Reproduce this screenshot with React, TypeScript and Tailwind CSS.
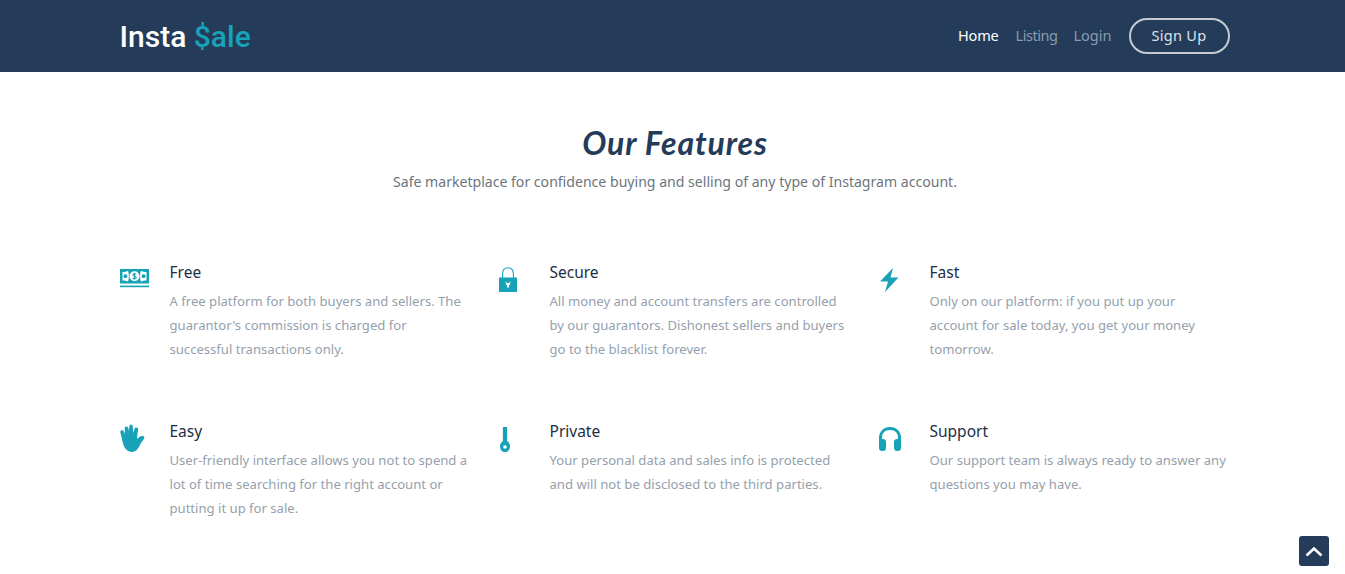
import React from 'react';

const MoneyIcon = () => (
  <svg width="29" height="19" viewBox="0 0 29 19" className="block">
    <rect x="0" y="0" width="29" height="14.5" fill="#17a2b8" />
    <path d="M2.5 3 C5 3 6.5 2.4 8 2 C9.2 4.5 9.2 10 8 12.5 C6.5 12 5 11.5 2.5 11.5 Z" fill="#fff" />
    <path d="M26.5 3 C24 3 22.5 2.4 21 2 C19.8 4.5 19.8 10 21 12.5 C22.5 12 24 11.5 26.5 11.5 Z" fill="#fff" />
    <circle cx="5.4" cy="7.2" r="1.9" fill="#17a2b8" />
    <circle cx="23.6" cy="7.2" r="1.9" fill="#17a2b8" />
    <circle cx="14.5" cy="7.2" r="5" fill="#fff" />
    <path d="M16.2 5.2 C15.2 4.4 13 4.6 13 6 C13 7.6 16.2 6.8 16.2 8.4 C16.2 9.8 13.8 10 12.8 9.2 M14.5 3.8 V10.6" stroke="#17a2b8" strokeWidth="1.1" fill="none" />
    <rect x="0" y="16.6" width="29" height="1.6" fill="#17a2b8" />
  </svg>
);

const LockIcon = () => (
  <svg width="18" height="25" viewBox="0 0 18 25" className="block">
    <path d="M3.6 11 V6.8 C3.6 2.8 6 0.7 9 0.7 C12 0.7 14.4 2.8 14.4 6.8 V11" fill="none" stroke="#17a2b8" strokeWidth="1.1" />
    <rect x="0" y="10.5" width="18" height="14.5" fill="#17a2b8" />
    <path d="M6.6 14 L8 16 H10 L11.4 14 L11 18 H10 V20.5 H8 V18 H7 Z" fill="#fff" />
  </svg>
);

const BoltIcon = () => (
  <svg width="19" height="24" viewBox="0 0 19 24" className="block">
    <path d="M13 0 L0 13.5 H8 L5 24 L18.5 9.5 H10.5 Z" fill="#17a2b8" />
  </svg>
);

const HandIcon = () => (
  <svg width="27" height="28" viewBox="0 0 28 30" className="block">
    <path d="M9 28 C6 26 4.5 22 3.8 18 L1.6 9 C1.2 7.2 3.4 6.6 4.2 8.2 L6.8 14 L6.2 5 C6.1 3 8.6 2.8 9 4.8 L10.6 12.6 L11.2 2.6 C11.3 0.8 13.6 0.8 13.7 2.6 L14.2 12.8 L16.8 5.4 C17.4 3.6 19.7 4.4 19.3 6.2 L18 17 L23 13.6 C25 12.4 27 14.2 25.6 15.8 C23.2 18.4 21.6 21.4 20 25 C18.4 28.4 14.4 29.6 12 29.2 C10.8 29 9.8 28.6 9 28 Z" fill="#17a2b8" stroke="#17a2b8" strokeWidth="1.2" strokeLinejoin="round" />
  </svg>
);

const KeyIcon = () => (
  <svg width="10" height="25" viewBox="0 0 10 25" className="block">
    <path d="M2.9 0 H7.1 V14 C8.8 15 10 17 10 19.4 C10 22.6 7.8 25 5 25 C2.2 25 0 22.6 0 19.4 C0 17 1.2 15 2.9 14 Z" fill="#17a2b8" />
    <circle cx="5" cy="20" r="1.8" fill="#fff" />
  </svg>
);

const HeadphonesIcon = () => (
  <svg width="22" height="24" viewBox="0 0 22 24" className="block">
    <path d="M1.5 14 V11 C1.5 5 5.5 1.5 11 1.5 C16.5 1.5 20.5 5 20.5 11 V14" fill="none" stroke="#17a2b8" strokeWidth="3" />
    <rect x="0" y="12" width="7" height="12" rx="3.2" fill="#17a2b8" />
    <rect x="15" y="12" width="7" height="12" rx="3.2" fill="#17a2b8" />
  </svg>
);

const features = [
  { title: 'Free', text: "A free platform for both buyers and sellers. The guarantor's commission is charged for successful transactions only.", icon: <MoneyIcon />, box: 'pl-[2px] pt-[8px]', textBox: '' },
  { title: 'Secure', text: 'All money and account transfers are controlled by our guarantors. Dishonest sellers and buyers go to the blacklist forever.', icon: <LockIcon />, box: 'pl-[1.5px] pt-[6px]', textBox: '' },
  { title: 'Fast', text: 'Only on our platform: if you put up your account for sale today, you get your money tomorrow.', icon: <BoltIcon />, box: 'pl-[2px] pt-[7px]', textBox: 'pr-[10px]' },
  { title: 'Easy', text: 'User-friendly interface allows you not to spend a lot of time searching for the right account or putting it up for sale.', icon: <HandIcon />, box: 'pl-[1.5px] pt-[4px]', textBox: '' },
  { title: 'Private', text: 'Your personal data and sales info is protected and will not be disclosed to the third parties.', icon: <KeyIcon />, box: 'pl-[2px] pt-[7px]', textBox: '' },
  { title: 'Support', text: 'Our support team is always ready to answer any questions you may have.', icon: <HeadphonesIcon />, box: 'pl-[1.5px] pt-[7px]', textBox: '' },
];

const App = () => {
  return (
    <div className="h-[574px] bg-white font-['Noto_Sans',sans-serif] overflow-hidden">
      <header className="h-[72px] bg-[#243c5a]">
        <div className="w-[1140px] mx-auto pl-[17px] pr-[13px] h-full flex items-center justify-between">
          <div className="font-['Roboto',sans-serif] text-[30px] font-medium text-white">
            Insta <span className="text-[#17a2b8]">$ale</span>
          </div>
          <nav className="flex items-center text-[14.5px]">
            <a className="text-white tracking-[-0.2px]">Home</a>
            <a className="ml-[17px] text-[#8a9bb0] tracking-[-0.45px]">Listing</a>
            <a className="ml-[16px] text-[#8a9bb0]">Login</a>
            <a className="ml-[17px] w-[101px] h-[36px] rounded-full border-2 border-[#c5cad1] text-[#dde1e6] flex items-center justify-center tracking-[0.3px]">Sign Up</a>
          </nav>
        </div>
      </header>

      <section className="pt-[51px] pl-[5px] text-center">
        <h2 className="font-['Lato',sans-serif] italic font-bold text-[32px] leading-[40px] tracking-[0.85px] text-[#243c5a]">Our Features</h2>
        <p className="mt-[9px] text-[14.08px] leading-[20px] text-[#6c757d]">Safe marketplace for confidence buying and selling of any type of Instagram account.</p>
      </section>

      <section className="w-[1140px] mx-auto mt-[69px] grid grid-cols-3 gap-y-[59px]">
        {features.map((f) => (
          <div key={f.title} className="pl-[15px] pr-[13px] flex">
            <div className={`w-[52px] shrink-0 ${f.box}`}>{f.icon}</div>
            <div className={`flex-1 ${f.textBox}`}>
              <h4 className="text-[15.5px] leading-[22px] font-normal text-[#1c2f45]">{f.title}</h4>
              <p className="mt-[6px] text-[13.1px] leading-[24px] text-[#959fad]">{f.text}</p>
            </div>
          </div>
        ))}
      </section>

      <button className="fixed right-[16px] top-[536px] w-[30px] h-[30px] rounded-[3px] bg-[#243c5a] flex items-center justify-center">
        <svg width="18" height="11" viewBox="0 0 18 11">
          <path d="M1.5 9.5 L9 2.5 L16.5 9.5" fill="none" stroke="#fff" strokeWidth="2.6" />
        </svg>
      </button>
    </div>
  );
};

export default App;
